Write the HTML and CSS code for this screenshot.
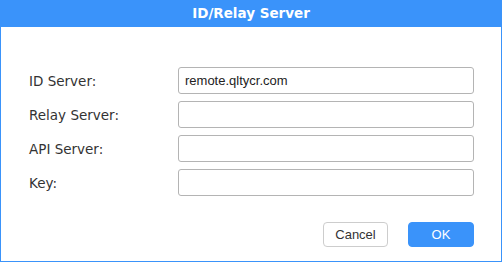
FILE: index.html
```html
<!DOCTYPE html>
<html>
<head lang="en">
    <meta charset="UTF-8">
    <title>ID/Relay Server</title>
    <link rel="stylesheet" href="styles.css">
</head>
<body>
<div class="dialog">
    <header class="titlebar">ID/Relay Server</header>
    <main class="form">
        <label class="label" for="idServer">ID Server:</label>
        <input class="field" id="idServer" type="text" value="remote.qltycr.com">
        <label class="label" for="relayServer">Relay Server:</label>
        <input class="field" id="relayServer" type="text">
        <label class="label" for="apiServer">API Server:</label>
        <input class="field" id="apiServer" type="text">
        <label class="label" for="key">Key:</label>
        <input class="field" id="key" type="text">
    </main>
    <footer class="actions">
        <button class="btn cancel">Cancel</button>
        <button class="btn ok">OK</button>
    </footer>
</div>
</body>
</html>
```

FILE: styles.css
```css
html, body{
    margin: 0;
    padding: 0;
    background: #fff;
}
.dialog{
    box-sizing: border-box;
    width: 502px;
    height: 262px;
    border: 1px solid #3a93fa;
    border-top: none;
    display: flex;
    flex-direction: column;
}
.titlebar{
    height: 27px;
    margin: 0 -1px;
    background-color: #3a93fa;
    color: #fff;
    font-family: "DejaVu Sans", Verdana, sans-serif;
    font-weight: bold;
    font-size: 13.5px;
    line-height: 27px;
    text-align: center;
}
.form{
    display: grid;
    grid-template-columns: 149px 1fr;
    row-gap: 7px;
    align-items: center;
    padding: 40px 27px 0 28px;
}
.label{
    font-family: "DejaVu Sans", Verdana, sans-serif;
    font-size: 13.5px;
    color: #333;
}
.field{
    box-sizing: border-box;
    height: 27px;
    margin: 0;
    padding: 0 6px;
    border: 1px solid #b4b4b4;
    border-radius: 3px;
    font-family: "Liberation Sans", Arial, sans-serif;
    font-size: 13px;
    color: #222;
    outline: none;
}
.actions{
    display: flex;
    justify-content: flex-end;
    gap: 20px;
    padding: 26px 27px 0 0;
}
.btn{
    box-sizing: border-box;
    height: 25px;
    margin: 0;
    border-radius: 4px;
    font-family: "Liberation Sans", Arial, sans-serif;
    font-size: 13px;
    cursor: pointer;
}
.cancel{
    width: 65px;
    background: #fff;
    border: 1px solid #cdcdcd;
    color: #333;
}
.ok{
    width: 66px;
    background: #3a93fa;
    border: 1px solid #3a93fa;
    color: #fff;
}
```
